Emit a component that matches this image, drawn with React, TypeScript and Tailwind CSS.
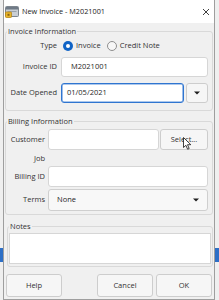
import React from 'react';

function TitleIcon() {
    return (
        <svg width="14" height="12" viewBox="0 0 14 12">
            <rect x="0.5" y="0.5" width="13" height="10" rx="1" fill="#c9ced4" stroke="#7d858e" />
            <rect x="1" y="1" width="12" height="2.5" fill="#6f7a86" />
            <rect x="2.5" y="5" width="9" height="1" fill="#9aa2ab" />
            <rect x="0.5" y="6" width="6" height="5.5" rx="0.8" fill="#e8b52a" stroke="#b5851a" strokeWidth="0.8" />
            <rect x="2.5" y="7.8" width="2" height="2" fill="#8a6212" />
        </svg>
    );
}

function Caret() {
    return (
        <svg width="6" height="4" viewBox="0 0 6 4">
            <path d="M0 0.5 L6 0.5 L3 3.5 Z" fill="#1e1e1e" />
        </svg>
    );
}

function Cursor() {
    return (
        <svg width="9" height="13" viewBox="0 0 9 13" className="absolute left-[22px] top-[7px]">
            <path d="M0.5 0.5 L0.5 10.5 L2.9 8.3 L4.6 12.2 L6.2 11.5 L4.5 7.7 L7.8 7.7 Z" fill="#ffffff" stroke="#111111" strokeWidth="0.8" strokeLinejoin="round" />
        </svg>
    );
}

export default function App() {
    const box = 'flex items-center rounded-[3px] border border-[#d6d6d6] bg-white text-[#1e1e1e]';
    const btn = 'flex items-center justify-center rounded-[3px] border border-[#cdcdcd] bg-[#f6f6f6] text-[#333333]';
    const legend = 'ml-[1px] px-[1px] leading-[10px] text-[#333333]';

    return (
        <div className="flex h-[300px] w-[219px] bg-[#efefef] font-['Open_Sans',sans-serif] text-[7.5px] leading-none text-[#333333]">
            <div className="flex w-[3px] flex-col">
                <div className="h-[248px]" />
                <div className="h-[14px] bg-[#2d6fc6]" />
            </div>

            <div className="flex w-[212px] flex-col border-x border-b border-[#9e9e9e] bg-[#f0f0f0]">
                {/* title bar */}
                <div className="flex h-[23px] items-center bg-white pl-[1px] pr-[4px]">
                    <TitleIcon />
                    <span className="ml-[3px] text-[7.3px] text-[#1a1a1a]">New Invoice - M2021001</span>
                    <svg width="8" height="8" viewBox="0 0 8 8" className="ml-auto">
                        <path d="M1 1 L7 7 M7 1 L1 7" stroke="#2a2a2a" strokeWidth="0.9" />
                    </svg>
                </div>

                <div className="flex flex-1 flex-col px-[1px]">
                    <fieldset className="mt-[3px] rounded-[3px] border border-[#d9d9d9] pt-[4px] pr-[4px] pb-[7px]">
                        <legend className={legend}>Invoice Information</legend>
                        <div className="flex h-[12px] items-center gap-[4px]">
                            <span className="w-[51px] text-right">Type</span>
                            <div className="ml-[2px] flex items-center">
                                <span className="flex h-[10px] w-[10px] items-center justify-center rounded-full bg-[#0f63c6]">
                                    <span className="h-[4px] w-[4px] rounded-full bg-white" />
                                </span>
                                <span className="ml-[3px]">Invoice</span>
                                <span className="ml-[6px] h-[10px] w-[10px] rounded-full border border-[#8f8f8f] bg-[#f7f7f7]" />
                                <span className="ml-[3px]">Credit Note</span>
                            </div>
                        </div>
                        <div className="mt-[5px] flex h-[20px] items-center gap-[4px]">
                            <span className="w-[51px] text-right">Invoice ID</span>
                            <div className={`${box} h-full flex-1 pl-[9px]`}>M2021001</div>
                        </div>
                        <div className="mt-[6px] flex h-[20px] items-center gap-[4px]">
                            <span className="w-[51px] text-right">Date Opened</span>
                            <div className="flex h-full flex-1 items-center rounded-[3px] border border-[#2f75d0] bg-white pl-[5px] text-[#1e1e1e] shadow-[inset_0_0_0_0.6px_#5b91dc]">01/05/2021</div>
                            <div className={`${btn} ml-[-2px] h-full w-[22px]`}>
                                <Caret />
                            </div>
                        </div>
                    </fieldset>

                    <fieldset className="mt-[5px] rounded-[3px] border border-[#d9d9d9] pt-[3px] pr-[4px] pb-[3px]">
                        <legend className={legend}>Billing Information</legend>
                        <div className="flex h-[21px] items-center gap-[3px]">
                            <span className="w-[39px] text-right">Customer</span>
                            <div className={`${box} h-full flex-1`} />
                            <div className={`${btn} relative ml-[-2px] h-full w-[48px]`}>
                                Select...
                                <Cursor />
                            </div>
                        </div>
                        <div className="flex h-[16px] items-center gap-[3px] pt-[2px]">
                            <span className="w-[39px] text-right">Job</span>
                        </div>
                        <div className="flex h-[21px] items-center gap-[3px]">
                            <span className="w-[39px] text-right">Billing ID</span>
                            <div className={`${box} h-full flex-1`} />
                        </div>
                        <div className="mt-[2px] flex h-[22px] items-center gap-[3px]">
                            <span className="w-[39px] text-right">Terms</span>
                            <div className="flex h-full flex-1 items-center justify-between rounded-[3px] border border-[#cfcfcf] bg-[#f8f8f8] pl-[8px] pr-[8px] text-[#1e1e1e]">
                                <span>None</span>
                                <Caret />
                            </div>
                        </div>
                    </fieldset>

                    <fieldset className="mt-[6px] ml-[2px] rounded-[3px] border border-[#d9d9d9] px-[1px] pt-[2px] pb-[2px]">
                        <legend className="px-[1px] leading-[10px] text-[#333333]">Notes</legend>
                        <div className="h-[31px] border border-[#d6d6d6] bg-white" />
                    </fieldset>

                    <div className="mt-[7px] flex h-[23px] pl-[1px] pr-[1px]">
                        <div className={`${btn} w-[56px]`}>Help</div>
                        <div className={`${btn} ml-auto w-[56px]`}>Cancel</div>
                        <div className={`${btn} ml-[3px] w-[56px]`}>OK</div>
                    </div>
                </div>
            </div>

            <div className="flex flex-1 flex-col">
                <div className="h-[248px]" />
                <div className="h-[14px] bg-[#2d6fc6]" />
            </div>
        </div>
    );
}
